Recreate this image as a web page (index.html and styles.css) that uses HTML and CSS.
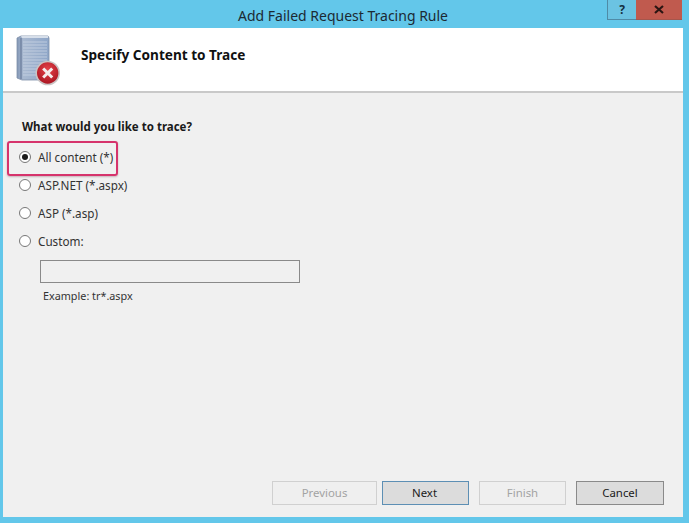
FILE: index.html
```html
<!DOCTYPE html>
<html lang="en">
<head>
<meta charset="utf-8">
<title>Add Failed Request Tracing Rule</title>
<link rel="stylesheet" href="styles.css">
</head>
<body>
<div class="window">
  <div class="titlebar">
    <div class="title">Add Failed Request Tracing Rule</div>
    <div class="controls">
      <div class="ctl help">?</div>
      <div class="ctl close">
        <svg width="10" height="9" viewBox="0 0 10 9"><path d="M1 1l8 7M9 1l-8 7" stroke="#2a1512" stroke-width="2.2" fill="none"/></svg>
      </div>
    </div>
  </div>
  <div class="client">
    <div class="banner">
      <svg class="logo" width="48" height="52" viewBox="0 0 48 52">
        <defs>
          <linearGradient id="book" x1="0" y1="0" x2="1" y2="0">
            <stop offset="0" stop-color="#8397b6"/>
            <stop offset="0.2" stop-color="#a9b9d0"/>
            <stop offset="1" stop-color="#8ea6c8"/>
          </linearGradient>
          <radialGradient id="err" cx="0.5" cy="0.35" r="0.7">
            <stop offset="0" stop-color="#e4434a"/>
            <stop offset="1" stop-color="#a40f1c"/>
          </radialGradient>
        </defs>
        <path d="M1 3l4-2h27l1 2v41l-3 1H6l-5-2z" fill="url(#book)" stroke="#7f8fa8" stroke-width="0.8"/>
        <path d="M5 1h27v2H6z" fill="#d7dfea"/>
        <path d="M5 3v41" stroke="#5e7090" stroke-width="1"/>
        <path d="M7 7h24M7 10h24M7 13h24M7 16h24M7 19h24M7 22h24M7 25h24M7 28h24M7 31h24M7 34h24M7 37h24M7 40h24" stroke="#c9d4e4" stroke-width="0.8"/>
        <circle cx="31.7" cy="38" r="11.5" fill="url(#err)" stroke="#c9c4c4" stroke-width="1.6"/>
        <path d="M27.2 33.5l9 9M36.2 33.5l-9 9" stroke="#f6ecec" stroke-width="3" fill="none"/>
      </svg>
      <div class="banner-title">Specify Content to Trace</div>
    </div>
    <div class="body">
      <div class="question">What would you like to trace?</div>
      <div class="options">
        <div class="option marked"><span class="radio on"></span><span>All content (*)</span></div>
        <div class="option"><span class="radio"></span><span>ASP.NET (*.aspx)</span></div>
        <div class="option"><span class="radio"></span><span>ASP (*.asp)</span></div>
        <div class="option"><span class="radio"></span><span>Custom:</span></div>
      </div>
      <div class="custom">
        <div class="textbox"></div>
        <div class="example">Example: tr*.aspx</div>
      </div>
    </div>
    <div class="footer">
      <div class="btn disabled prev">Previous</div>
      <div class="btn default next">Next</div>
      <div class="btn disabled finish">Finish</div>
      <div class="btn cancel">Cancel</div>
    </div>
  </div>
</div>
</body>
</html>
```
FILE: styles.css
```css
* { box-sizing: border-box; }
html, body { margin: 0; height: 100%; }
body { background: #63c7ea; font-family: "Noto Sans", "Open Sans", sans-serif; font-size: 12px; color: #222; overflow: hidden; }
.window { width: 689px; height: 523px; display: flex; flex-direction: column; padding: 0 6px 6px 3px; }
.titlebar { height: 28px; flex: none; position: relative; display: flex; justify-content: center; align-items: center; }
.title { font-size: 14px; color: #1c2a33; padding-top: 2px; }
.controls { position: absolute; top: 0; right: 1px; display: flex; }
.ctl { height: 20px; display: flex; align-items: center; justify-content: center; }
.help { width: 29px; background: #6bc3e2; border: 1px solid #4f8ba6; border-top: 0; border-right: 0; font-weight: 700; font-size: 12px; color: #14303f; }
.close { width: 46px; background: #c05a4e; border-bottom: 1px solid #a5564c; }
.client { flex: 1; display: flex; flex-direction: column; background: #f0f0f0; min-height: 0; }
.banner { height: 65px; flex: none; background: #fff; border-bottom: 2px solid #c9c9c9; display: flex; padding-left: 13px; }
.logo { margin-top: 7px; flex: none; }
.banner-title { margin-left: 17px; margin-top: 16px; font-weight: 700; font-size: 13.6px; line-height: 22px; color: #111; }
.body { flex: 1; padding: 25px 0 0 19px; }
.question { font-weight: 700; font-size: 11.5px; line-height: 18px; color: #1a1a1a; }
.options { display: flex; flex-direction: column; gap: 10px; margin-top: 12px; }
.option { height: 18px; display: flex; align-items: center; gap: 7px; position: relative; font-size: 11.7px; color: #333; }
.marked::before { content: ""; position: absolute; left: -15px; top: -7px; width: 107px; height: 31px; border: 2px solid #d6336c; border-radius: 3px; box-shadow: 0 1px 2px rgba(120, 60, 80, 0.35); }
.radio { width: 12px; height: 12px; border-radius: 50%; border: 1px solid #777; background: #fff; margin-left: -3px; flex: none; display: flex; align-items: center; justify-content: center; }
.on::after { content: ""; width: 6px; height: 6px; border-radius: 50%; background: #1a1a1a; }
.custom { margin-left: 18px; margin-top: 10px; }
.textbox { width: 260px; height: 23px; border: 1px solid #8a8a8a; background: #f0f0f0; }
.example { margin-left: 3px; margin-top: 4px; line-height: 18px; font-size: 10.8px; color: #333; }
.footer { flex: none; display: flex; height: 36px; padding-left: 269px; align-items: flex-start; }
.btn { height: 24px; padding-bottom: 1px; display: flex; align-items: center; justify-content: center; border: 1px solid #adadad; font-size: 11.4px; }
.prev { width: 105px; margin-right: 5px; }
.next { width: 87px; margin-right: 10px; padding-right: 2px; }
.finish { width: 87px; margin-right: 10px; }
.cancel { width: 88px; }
.disabled { background: #efefef; border-color: #d0d0d0; color: #a3a3a3; }
.default { background: #dcdcdc; border-color: #5d8fb4; color: #1a1a1a; }
.cancel { background: #dcdcdc; border-color: #8a8a8a; color: #1a1a1a; }
```
